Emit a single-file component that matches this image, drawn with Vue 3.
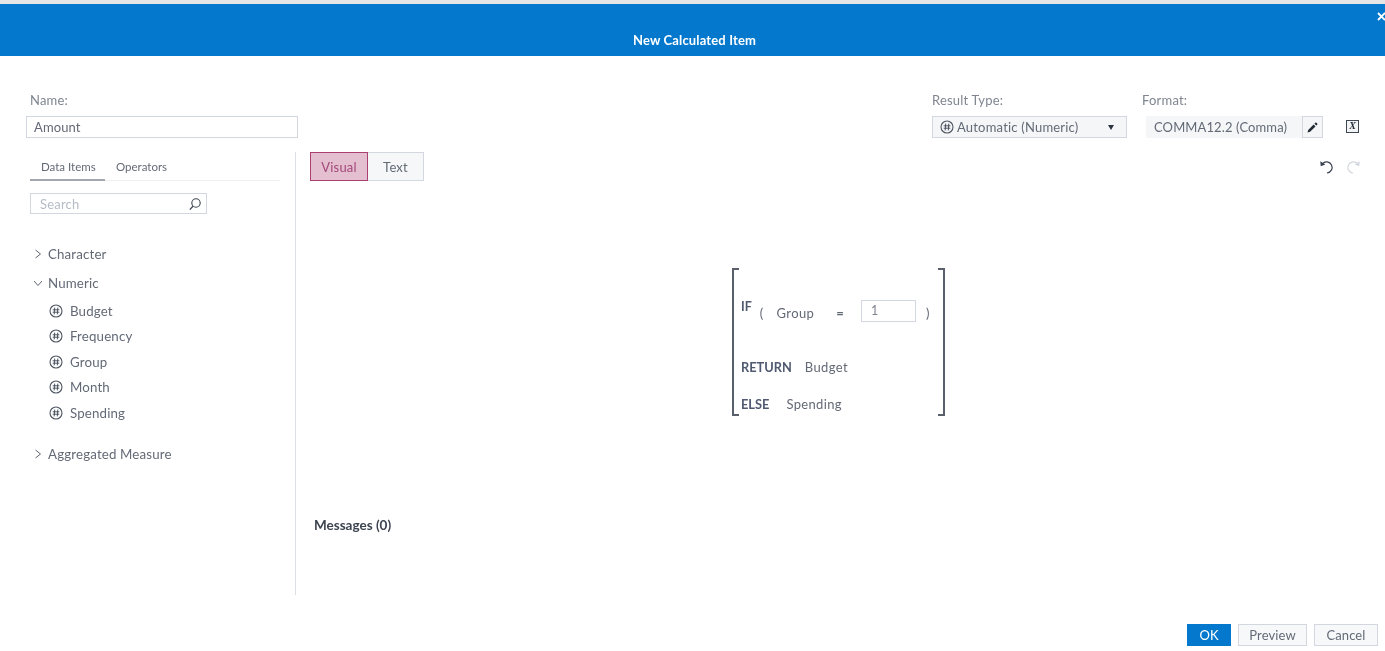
<script setup>
const fields = ['Budget', 'Frequency', 'Group', 'Month', 'Spending']
</script>

<template>
  <div class="page">
    <div class="strip"></div>
    <header class="header">
      <span class="title">New Calculated Item</span>
      <button class="close" aria-label="Close">
        <svg width="9" height="9" viewBox="0 0 9 9"><path d="M1 1l7 7M8 1L1 8" stroke="#fff" stroke-width="1.8" fill="none"/></svg>
      </button>
    </header>

    <section class="fields">
      <div class="name-group">
        <label class="label">Name:</label>
        <div class="box name-input">Amount</div>
      </div>
      <div class="result-group">
        <label class="label result-label">Result Type:</label>
        <div class="box select">
          <svg class="hash" width="14" height="14" viewBox="0 0 14 14"><use href="#hash-glyph" /></svg>
          <span class="select-text">Automatic (Numeric)</span>
          <span class="caret"></span>
        </div>
      </div>
      <div class="format-group">
        <label class="label">Format:</label>
        <div class="format-row">
          <div class="format-value">COMMA12.2 (Comma)</div>
          <button class="pencil" aria-label="Edit format">
            <svg width="13" height="13" viewBox="0 0 13 13"><path d="M1.5 11.5l.7-2.6 5.4-5.4 1.9 1.9-5.4 5.4zM8.4 2.7l.9-.9a.8.8 0 0 1 1.1 0l.8.8a.8.8 0 0 1 0 1.1l-.9.9z" fill="#222a36"/></svg>
          </button>
          <span class="fx">X</span>
        </div>
      </div>
    </section>

    <main class="main">
      <aside class="side">
        <nav class="tabs">
          <span class="tab active">Data Items</span>
          <span class="tab">Operators</span>
        </nav>
        <div class="box search">
          <span>Search</span>
          <svg width="14" height="14" viewBox="0 0 14 14"><circle cx="8" cy="6" r="4.2" fill="none" stroke="#3c4450" stroke-width="1.1"/><path d="M5 9.2L1.8 12.6" stroke="#3c4450" stroke-width="1.3"/></svg>
        </div>
        <div class="tree">
          <div class="node first">
            <svg class="chev" width="8" height="10" viewBox="0 0 8 10"><path d="M1.5 1l5 4-5 4" fill="none" stroke="#5d6470" stroke-width="1"/></svg>
            <span>Character</span>
          </div>
          <div class="node second">
            <svg class="chev" width="8" height="10" viewBox="0 0 8 10"><path d="M0 3l4 4.5L8 3" fill="none" stroke="#5d6470" stroke-width="1"/></svg>
            <span>Numeric</span>
          </div>
          <ul class="items">
            <li v-for="f in fields" :key="f" class="item">
              <svg class="hash" width="14" height="14" viewBox="0 0 14 14"><use href="#hash-glyph" /></svg>
              <span>{{ f }}</span>
            </li>
          </ul>
          <div class="node third">
            <svg class="chev" width="8" height="10" viewBox="0 0 8 10"><path d="M1.5 1l5 4-5 4" fill="none" stroke="#5d6470" stroke-width="1"/></svg>
            <span>Aggregated Measure</span>
          </div>
        </div>
      </aside>

      <div class="editor">
        <div class="editor-top">
          <div class="toggle">
            <span class="seg on">Visual</span>
            <span class="seg">Text</span>
          </div>
          <div class="history">
            <svg width="16" height="16" viewBox="0 0 16 16"><path d="M3.4 4.6A5.6 5.6 0 1 1 8 14" fill="none" stroke="#3a4250" stroke-width="1.2"/><path d="M1.2 2.2l.6 5 4.6-1.6z" fill="#3a4250"/></svg>
            <svg width="16" height="16" viewBox="0 0 16 16"><path d="M12.6 4.6A5.6 5.6 0 1 0 8 14" fill="none" stroke="#d4d8de" stroke-width="1.2"/><path d="M14.8 2.2l-.6 5-4.6-1.6z" fill="#d4d8de"/></svg>
          </div>
        </div>

        <div class="canvas">
          <div class="expr">
            <div class="row if-row">
              <b class="kw if-kw">IF</b>
              <span class="paren">(</span>
              <span class="g">Group</span>
              <b class="eq">=</b>
              <span class="box val">1</span>
              <span class="paren close-p">)</span>
            </div>
            <div class="row ret-row"><b class="kw">RETURN</b><span>Budget</span></div>
            <div class="row else-row"><b class="kw">ELSE</b><span>Spending</span></div>
          </div>
        </div>

        <div class="messages">Messages (0)</div>
      </div>
    </main>

    <footer class="footer">
      <button class="btn primary">OK</button>
      <button class="btn">Preview</button>
      <button class="btn">Cancel</button>
    </footer>

    <svg width="0" height="0" class="defs">
      <symbol id="hash-glyph" viewBox="0 0 14 14">
        <circle cx="7" cy="7" r="6" fill="none" stroke="#4d5561" stroke-width="1.1"/>
        <path d="M5.7 3.6L5.2 10.4M8.8 3.6L8.3 10.4M3.7 5.8h6.6M3.7 8.2h6.6" stroke="#4d5561" stroke-width="1" fill="none"/>
      </symbol>
    </svg>
  </div>
</template>

<style>
html, body { margin: 0; background: #fff; overflow: hidden; }
</style>

<style scoped>
.page {
  width: 1385px;
  height: 651px;
  display: flex;
  flex-direction: column;
  position: relative;
  overflow: hidden;
  background: #fff;
  font-family: Lato, "Open Sans", sans-serif;
  font-size: 13px;
  color: #636a76;
  letter-spacing: 0.2px;
  filter: blur(0.3px);
}
.strip { height: 4px; background: #e6e6e6; flex: none; }
.header {
  height: 52px;
  flex: none;
  background: #0378cd;
  position: relative;
  display: flex;
  justify-content: center;
  align-items: flex-end;
  box-sizing: border-box;
  padding-bottom: 8px;
}
.title { color: #fff; font-weight: 700; font-size: 13px; letter-spacing: 0.15px; line-height: 16px; margin-left: 4px; }
.close {
  position: absolute;
  right: -1px;
  top: 7px;
  width: 10px;
  height: 10px;
  padding: 0;
  border: 0;
  background: none;
  line-height: 0;
}
.fields {
  height: 96px;
  flex: none;
  display: flex;
  box-sizing: border-box;
  padding: 36px 0 0 26px;
}
.label { display: block; height: 16px; line-height: 16px; color: #7f8690; font-size: 13px; margin-bottom: 8px; }
.box { border: 1px solid #d3d8e0; box-sizing: border-box; background: #fff; }
.name-group { width: 272px; }
.name-group .label { padding-left: 4px; }
.name-input { height: 22px; line-height: 20px; padding-left: 7px; letter-spacing: 0.1px; }
.result-group { width: 195px; margin-left: 634px; }
.select {
  height: 22px;
  display: flex;
  align-items: center;
  padding: 0 12px 0 8px;
  background: #f5f6f8;
}
.select .hash { margin-left: -1px; }
.select-text { margin-left: 3px; flex: 1; }
.caret { width: 0; height: 0; border: 3px solid transparent; border-top: 5px solid #2c3440; border-bottom: 0; }
.format-group { margin-left: 15px; }
.format-row { display: flex; align-items: center; height: 22px; margin-left: 4px; }
.format-value {
  width: 156px;
  height: 22px;
  line-height: 22px;
  background: #f5f6f8;
  padding-left: 8px;
  box-sizing: border-box;
  letter-spacing: 0.12px;
}
.pencil {
  width: 21px;
  height: 22px;
  padding: 0;
  border: 1px solid #d3d8e0;
  background: #f5f6f8;
  display: flex;
  align-items: center;
  justify-content: center;
}
.fx {
  width: 13px;
  height: 13px;
  margin-left: 23px;
  margin-top: -2px;
  border: 1px solid #3f4753;
  box-sizing: border-box;
  background: #f2f3f5;
  display: flex;
  align-items: center;
  justify-content: center;
  font: italic 700 10px/1 "Liberation Serif", serif;
  letter-spacing: 0;
  color: #222a36;
}
.main { flex: 1; display: flex; min-height: 0; height: 443px; }
.side { width: 296px; flex: none; border-right: 1px solid #dcdfe4; box-sizing: border-box; padding: 0 15px 0 30px; }
.tabs { display: flex; height: 29px; border-bottom: 1px solid #eef0f2; box-sizing: border-box; font-size: 11.5px; letter-spacing: 0; }
.tab { padding: 0 11px; line-height: 30px; height: 29px; box-sizing: border-box; }
.tab.active { width: 75px; padding-right: 0; border-bottom: 2px solid #a3a7ad; }
.search {
  width: 177px;
  height: 21px;
  margin-top: 12px;
  display: flex;
  align-items: center;
  justify-content: space-between;
  padding: 0 4px 0 9px;
  color: #b6bcc6;
}
.tree { margin-left: 4px; font-size: 13.3px; letter-spacing: 0.15px; }
.node { display: flex; align-items: center; height: 18px; }
.chev { margin-right: 6px; flex: none; }
.first { margin-top: 31px; }
.second { margin-top: 11px; }
.items { list-style: none; margin: 6px 0 0; padding: 0 0 0 15px; }
.item { display: flex; align-items: center; height: 25.5px; }
.item .hash { margin-right: 7px; }
.third { margin-top: 19px; }
.editor { flex: 1; min-width: 0; display: flex; flex-direction: column; padding-left: 14px; }
.editor-top { display: flex; justify-content: space-between; align-items: center; height: 29px; flex: none; }
.toggle { display: flex; }
.seg {
  width: 56px;
  height: 29px;
  box-sizing: border-box;
  border: 1px solid #d3d8e0;
  border-left: 0;
  background: #f6f7f9;
  text-align: center;
  line-height: 29px;
}
.seg.on {
  width: 58px;
  border: 1px solid #ab3f71;
  background: #e3bfd0;
  color: #a4487a;
}
.history { display: flex; gap: 10px; padding-right: 24px; }
.canvas { flex: none; height: 235px; padding-top: 87px; box-sizing: border-box; padding-left: 422px; }
.expr {
  width: 213px;
  height: 148px;
  box-sizing: border-box;
  position: relative;
  border-left: 2px solid #59606b;
  border-right: 2px solid #59606b;
  padding: 32px 0 0 7px;
  letter-spacing: 0.35px;
}
.expr::before, .expr::after {
  content: "";
  position: absolute;
  left: 0;
  right: 0;
  height: 0;
  border-top: 2px solid #59606b;
  clip-path: polygon(0 0, 5px 0, 5px 100%, 0 100%, 0 0, 100% 0, 100% 100%, calc(100% - 5px) 100%, calc(100% - 5px) 0, 100% 0);
}
.expr::before { top: 0; }
.expr::after { bottom: 0; }
.row { display: flex; align-items: center; }
.kw { color: #4f5a70; font-weight: 700; font-size: 12.8px; letter-spacing: 0; }
.if-row { height: 22px; }
.if-kw { font-size: 12.5px; margin-top: -9px; }
.paren { margin-left: 8px; padding-top: 4px; }
.g { margin-left: 13px; padding-top: 4px; }
.eq { margin-left: 22px; font-size: 13px; padding-top: 4px; }
.val { width: 55px; height: 22px; margin-left: 17px; line-height: 20px; padding-left: 9px; font-size: 12.5px; color: #7f8690; }
.close-p { margin-left: 10px; padding-top: 3px; }
.ret-row { margin-top: 36px; height: 18px; gap: 13px; }
.else-row { margin-top: 19px; height: 18px; gap: 17px; }
.messages { margin: 101px 0 0 4px; color: #3c4450; font-weight: 700; font-size: 13.5px; letter-spacing: 0; line-height: 16px; }
.footer { height: 56px; flex: none; display: flex; justify-content: flex-end; gap: 7px; padding: 29px 7px 0 0; box-sizing: border-box; }
.btn {
  height: 22px;
  padding: 0;
  width: 69px;
  font: inherit;
  letter-spacing: 0.1px;
  color: #636a76;
  background: #f7f8fa;
  border: 1px solid #d3d8e0;
  box-sizing: border-box;
}
.btn:last-child { width: 64px; }
.btn.primary { width: 44px; background: #0378cd; border-color: #0378cd; color: #fff; }
.defs { position: absolute; }
</style>
